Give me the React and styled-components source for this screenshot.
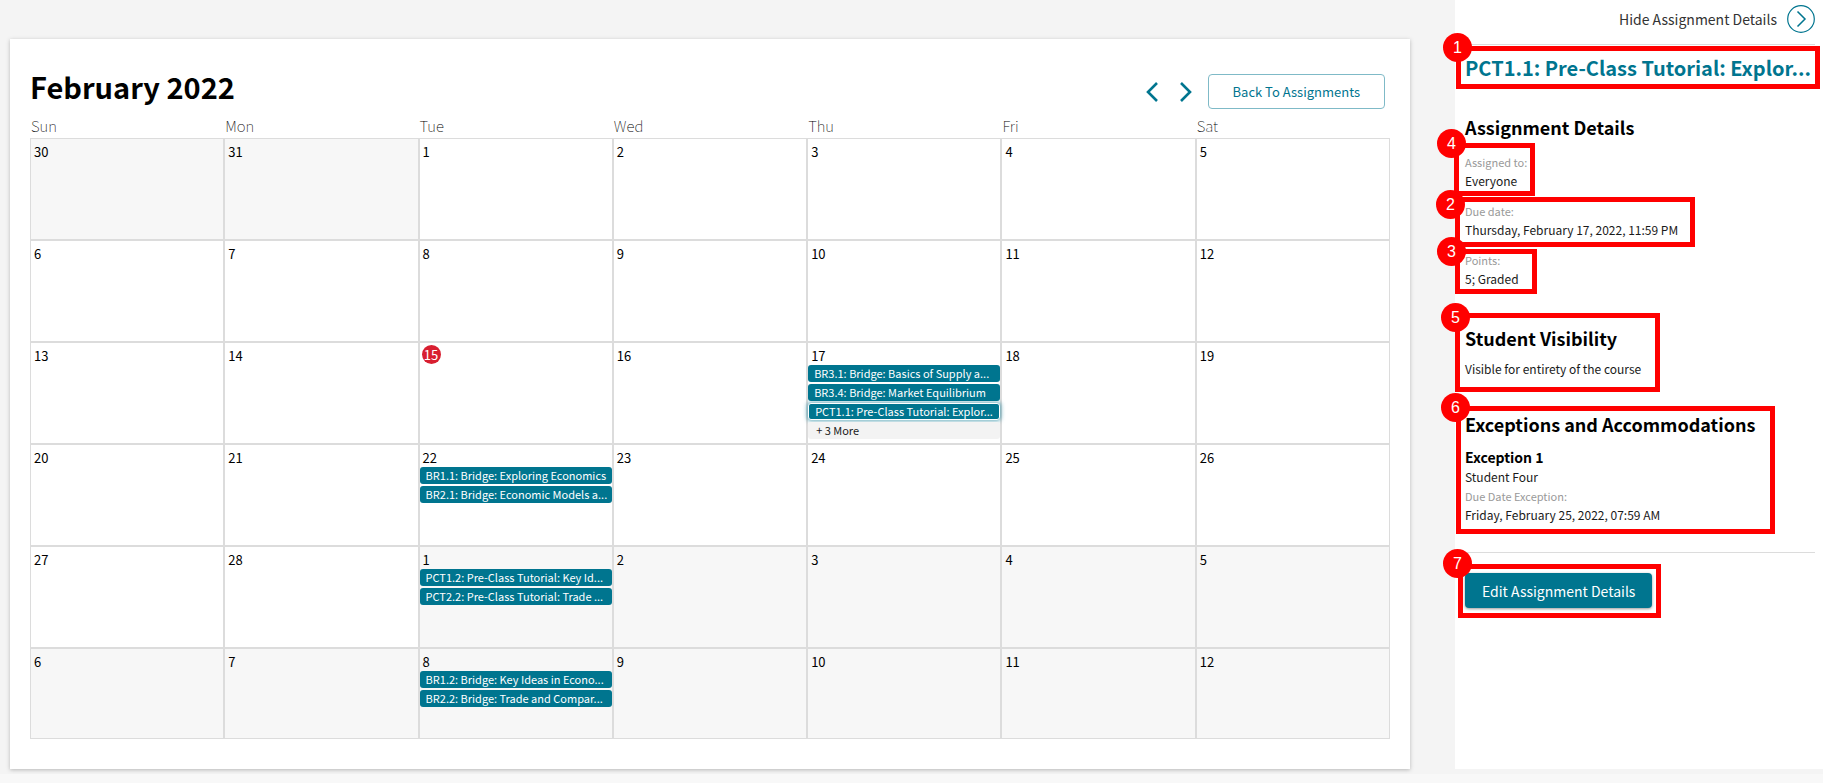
import React from 'react';
import styled, { createGlobalStyle, ThemeProvider } from 'styled-components';

const theme = {
	teal: '#00758f',
	line: '#dcdcdc',
	page: '#f4f4f4',
	muted: '#f7f7f7',
	label: '#999999',
	text: '#1a1a1a',
	callout: '#ff0000',
};

const GlobalStyle = createGlobalStyle`
	*, *::before, *::after {
		box-sizing: border-box;
	}
	body {
		margin: 0;
		background: #f8f8f8;
		font-family: 'Noto Sans CJK SC', 'Noto Sans', sans-serif;
		color: #000;
	}
	button {
		font-family: inherit;
		cursor: pointer;
	}
	h1, h2, h3, p, dl, dd {
		margin: 0;
	}
`;

const Page = styled.div`
	display: flex;
	align-items: stretch;
	padding-bottom: 5px;
	background: ${({ theme }) => theme.page};
`;

const CalendarCard = styled.main`
	flex: 1;
	min-width: 0;
	margin: 39px 45px 0 10px;
	padding: 27px 20px 30px;
	background: #fff;
	box-shadow: 0 1px 4px rgba(0, 0, 0, 0.25);
`;

const Toolbar = styled.header`
	display: flex;
	align-items: flex-end;
	height: 49px;
	padding: 0 5px 6px 0;
`;

const Month = styled.h1`
	flex: 1;
	align-self: flex-start;
	font-size: 29px;
	line-height: 40px;
	font-weight: 700;
`;

const ArrowButton = styled.button`
	display: grid;
	place-items: center;
	width: 34px;
	height: 34px;
	padding: 0;
	border: none;
	background: transparent;
	color: ${({ theme }) => theme.teal};
`;

const BackButton = styled.button`
	height: 35px;
	margin-left: 5px;
	padding: 0 24px;
	border: 1px solid #7fbac7;
	border-radius: 4px;
	background: #fff;
	color: ${({ theme }) => theme.teal};
	font-size: 13px;
	line-height: 20px;
`;

const MonthTable = styled.table`
	width: 100%;
	table-layout: fixed;
	border-collapse: separate;
	border-spacing: 0;
`;

const Weekday = styled.th`
	height: 23px;
	padding: 0 1px 2px;
	font-size: 15px;
	line-height: 21px;
	font-weight: 100;
	text-align: left;
`;

const Day = styled.td`
	height: ${({ $last }) => ($last ? 91 : 102)}px;
	padding: 0;
	border: 1px solid ${({ theme }) => theme.line};
	background: ${({ $muted, theme }) => ($muted ? theme.muted : '#fff')};
	vertical-align: top;
`;

const DayNumber = styled.div`
	height: 22px;
	padding: 3px 3px 0;
	font-size: 13px;
	line-height: 20px;
`;

const Today = styled.div`
	width: 19px;
	height: 19px;
	margin: 2px;
	border-radius: 50%;
	background: #d81e30;
	color: #fff;
	font-size: 13px;
	line-height: 19px;
	text-align: center;
`;

const EventList = styled.div`
	display: grid;
	gap: 2px;
`;

const Event = styled.button`
	height: 17px;
	padding: 0 6px;
	border: ${({ $active }) => ($active ? '1px solid #fff' : 'none')};
	border-radius: 3px;
	background: ${({ theme }) => theme.teal};
	box-shadow: ${({ $active }) => ($active ? '0 0 4px 1px rgba(0, 117, 143, 0.6)' : 'none')};
	color: #fff;
	font-size: 11px;
	line-height: 15px;
	font-weight: 400;
	text-align: left;
	white-space: nowrap;
	overflow: hidden;
`;

const MoreButton = styled.button`
	height: 17px;
	padding: 0 8px;
	border: none;
	border-radius: 3px;
	background: #f3f3f3;
	color: ${({ theme }) => theme.text};
	font-size: 11px;
	line-height: 15px;
	text-align: left;
`;

const Panel = styled.aside`
	position: relative;
	flex: 0 0 368px;
	padding: 0 8px 0 10px;
	background: #fff;
`;

const PanelHeader = styled.div`
	display: flex;
	justify-content: flex-end;
	height: 45px;
	border-bottom: 1px solid ${({ theme }) => theme.line};
`;

const HideButton = styled.button`
	display: flex;
	align-items: center;
	gap: 10px;
	height: 38px;
	padding: 0;
	border: none;
	background: transparent;
	color: #333;
	font-size: 14px;
	line-height: 20px;
`;

const AssignmentTitle = styled.h2`
	margin-top: 9px;
	color: ${({ theme }) => theme.teal};
	font-size: 20px;
	line-height: 28px;
	font-weight: 700;
	white-space: nowrap;
`;

const Section = styled.section`
	margin-top: 33px;
`;

const SectionTitle = styled.h2`
	margin-bottom: ${({ $gap }) => $gap}px;
	font-size: 18px;
	line-height: 24px;
	font-weight: 700;
	white-space: nowrap;
`;

const ExceptionTitle = styled.h3`
	font-size: 14px;
	line-height: 20px;
	font-weight: 700;
`;

const Details = styled.dl`
	display: grid;
	gap: 11px;
	padding-bottom: 4px;
`;

const Label = styled.dt`
	color: ${({ theme }) => theme.label};
	font-size: 11px;
	line-height: 18px;
`;

const Value = styled.dd`
	color: ${({ theme }) => theme.text};
	font-size: 12px;
	line-height: 20px;
`;

const Note = styled.p`
	color: ${({ theme }) => theme.text};
	font-size: 12px;
	line-height: 20px;
`;

const PanelFooter = styled.div`
	margin-top: 23px;
	padding-top: 20px;
	border-top: 1px solid ${({ theme }) => theme.line};
`;

const EditButton = styled.button`
	height: 35px;
	padding: 0 17px;
	border: none;
	border-radius: 4px;
	background: ${({ theme }) => theme.teal};
	box-shadow: 0 1px 3px rgba(0, 0, 0, 0.4);
	color: #fff;
	font-size: 14px;
	line-height: 20px;
`;

// Callouts float over the panel, placed from its top left corner
const Callout = styled.div`
	position: absolute;
	left: ${({ $x }) => $x}px;
	top: ${({ $y }) => $y}px;
	width: ${({ $w }) => $w}px;
	height: ${({ $h }) => $h}px;
	border: 5px solid ${({ theme }) => theme.callout};
	pointer-events: none;
`;

const CalloutBadge = styled.span`
	position: absolute;
	left: ${({ $x }) => $x - 15}px;
	top: ${({ $y }) => $y - 15}px;
	width: 29px;
	height: 29px;
	border-radius: 50%;
	background: ${({ theme }) => theme.callout};
	color: #fff;
	font-family: 'Liberation Sans', Arial, sans-serif;
	font-size: 16px;
	line-height: 29px;
	text-align: center;
	pointer-events: none;
`;

const weekdays = ['Sun', 'Mon', 'Tue', 'Wed', 'Thu', 'Fri', 'Sat'];

const weeks = [
	[30, 31, 1, 2, 3, 4, 5],
	[6, 7, 8, 9, 10, 11, 12],
	[13, 14, 15, 16, 17, 18, 19],
	[20, 21, 22, 23, 24, 25, 26],
	[27, 28, 1, 2, 3, 4, 5],
	[6, 7, 8, 9, 10, 11, 12],
];

// keyed by week index and weekday index
const events = {
	'2-4': [
		'BR3.1: Bridge: Basics of Supply a...',
		'BR3.4: Bridge: Market Equilibrium',
		'PCT1.1: Pre-Class Tutorial: Explor...',
	],
	'3-2': ['BR1.1: Bridge: Exploring Economics', 'BR2.1: Bridge: Economic Models a...'],
	'4-2': ['PCT1.2: Pre-Class Tutorial: Key Id...', 'PCT2.2: Pre-Class Tutorial: Trade ...'],
	'5-2': ['BR1.2: Bridge: Key Ideas in Econo...', 'BR2.2: Bridge: Trade and Compar...'],
};

const callouts = [
	{ n: 1, box: [1, 46, 364, 43], badge: [3, 48] },
	{ n: 4, box: [-1, 143, 81, 53], badge: [-3, 144] },
	{ n: 2, box: [0, 197, 240, 50], badge: [-4, 205] },
	{ n: 3, box: [0, 249, 82, 45], badge: [-3, 252] },
	{ n: 5, box: [0, 313, 205, 79], badge: [1, 318] },
	{ n: 6, box: [1, 406, 319, 128], badge: [1, 408] },
	{ n: 7, box: [3, 564, 203, 54], badge: [3, 564] },
];

const isOutside = (week, number) => (week === 0 && number > 20) || (week > 3 && number < 20);

const Chevron = ({ left }) => (
	<svg width="14" height="22" viewBox="0 0 14 22" fill="none" aria-hidden="true">
		<path
			d={left ? 'M12 2L3 11L12 20' : 'M2 2L11 11L2 20'}
			stroke="currentColor"
			strokeWidth="2.6"
		/>
	</svg>
);

const CircleChevron = () => (
	<svg width="28" height="28" viewBox="0 0 28 28" fill="none" stroke="#00758f" aria-hidden="true">
		<circle cx="14" cy="14" r="13.3" strokeWidth="1.2" />
		<path d="M10.5 6.5L18 14L10.5 21.5" strokeWidth="1.5" />
	</svg>
);

const DayCell = ({ week, weekday, number }) => {
	const dayEvents = events[`${week}-${weekday}`];
	const today = week === 2 && weekday === 2;

	return (
		<Day $muted={isOutside(week, number)} $last={week === 5}>
			{today ? <Today>{number}</Today> : <DayNumber>{number}</DayNumber>}
			{dayEvents && (
				<EventList>
					{dayEvents.map((title, i) => (
						<Event key={title} type="button" $active={i === 2}>
							{title}
						</Event>
					))}
					{dayEvents.length > 2 && <MoreButton type="button">+ 3 More</MoreButton>}
				</EventList>
			)}
		</Day>
	);
};

const Calendar = () => (
	<CalendarCard>
		<Toolbar>
			<Month>February 2022</Month>
			<ArrowButton type="button" aria-label="Previous month">
				<Chevron left />
			</ArrowButton>
			<ArrowButton type="button" aria-label="Next month">
				<Chevron />
			</ArrowButton>
			<BackButton type="button">Back To Assignments</BackButton>
		</Toolbar>
		<MonthTable>
			<thead>
				<tr>
					{weekdays.map((name) => (
						<Weekday key={name} scope="col">
							{name}
						</Weekday>
					))}
				</tr>
			</thead>
			<tbody>
				{weeks.map((days, week) => (
					<tr key={week}>
						{days.map((number, weekday) => (
							<DayCell key={weekday} week={week} weekday={weekday} number={number} />
						))}
					</tr>
				))}
			</tbody>
		</MonthTable>
	</CalendarCard>
);

const AssignmentPanel = () => (
	<Panel>
		<PanelHeader>
			<HideButton type="button">
				Hide Assignment Details
				<CircleChevron />
			</HideButton>
		</PanelHeader>
		<AssignmentTitle>PCT1.1: Pre-Class Tutorial: Explor...</AssignmentTitle>

		<Section>
			<SectionTitle $gap={14}>Assignment Details</SectionTitle>
			<Details>
				<div>
					<Label>Assigned to:</Label>
					<Value>Everyone</Value>
				</div>
				<div>
					<Label>Due date:</Label>
					<Value>Thursday, February 17, 2022, 11:59 PM</Value>
				</div>
				<div>
					<Label>Points:</Label>
					<Value>5; Graded</Value>
				</div>
			</Details>
		</Section>

		<Section>
			<SectionTitle $gap={9}>Student Visibility</SectionTitle>
			<Note>Visible for entirety of the course</Note>
		</Section>

		<Section>
			<SectionTitle $gap={11}>Exceptions and Accommodations</SectionTitle>
			<ExceptionTitle>Exception 1</ExceptionTitle>
			<Note>Student Four</Note>
			<Details>
				<div>
					<Label>Due Date Exception:</Label>
					<Value>Friday, February 25, 2022, 07:59 AM</Value>
				</div>
			</Details>
		</Section>

		<PanelFooter>
			<EditButton type="button">Edit Assignment Details</EditButton>
		</PanelFooter>

		{callouts.map(({ n, box: [x, y, w, h] }) => (
			<Callout key={n} $x={x} $y={y} $w={w} $h={h} />
		))}
		{callouts.map(({ n, badge: [x, y] }) => (
			<CalloutBadge key={n} $x={x} $y={y}>
				{n}
			</CalloutBadge>
		))}
	</Panel>
);

const App = () => (
	<ThemeProvider theme={theme}>
		<GlobalStyle />
		<Page>
			<Calendar />
			<AssignmentPanel />
		</Page>
	</ThemeProvider>
);

export default App;
